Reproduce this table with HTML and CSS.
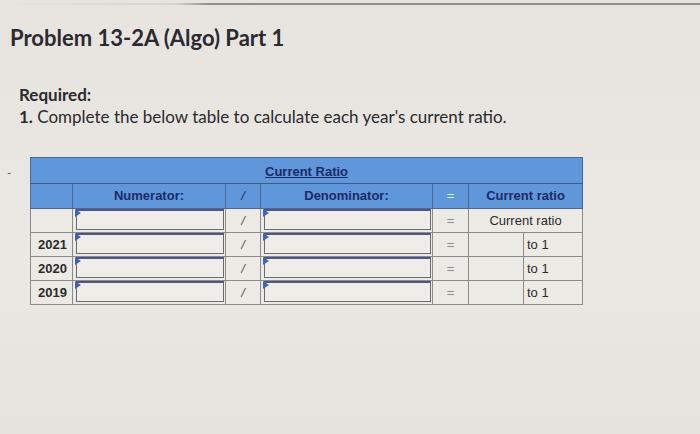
FILE: index.html
```html
<!DOCTYPE html>
<html>
<head>
<meta charset="utf-8">
<link rel="stylesheet" href="styles.css">
</head>
<body>
<div class="page">
  <div class="topline"></div>
  <h1 class="title">Problem 13-2A (Algo) Part 1</h1>
  <div class="req">
    <div class="req-head">Required:</div>
    <div class="req-text"><b>1.</b> Complete the below table to calculate each year's current ratio.</div>
  </div>
  <div class="table-wrap">
    <span class="dash">-</span>
    <table class="ratio">
      <colgroup>
        <col class="c-year"><col class="c-num"><col class="c-slash"><col class="c-den"><col class="c-eq"><col class="c-r1"><col class="c-r2">
      </colgroup>
      <tr class="h1">
        <th colspan="7"><span class="cap">Current Ratio</span></th>
      </tr>
      <tr class="h2">
        <th></th>
        <th>Numerator:</th>
        <th class="sl">/</th>
        <th>Denominator:</th>
        <th class="eq">=</th>
        <th colspan="2">Current ratio</th>
      </tr>
      <tr class="row">
        <td class="yr"></td>
        <td class="inp"><div class="box"><i class="flag"></i></div></td>
        <td class="sl">/</td>
        <td class="inp"><div class="box"><i class="flag"></i></div></td>
        <td class="eq">=</td>
        <td colspan="2" class="lbl">Current ratio</td>
      </tr>
      <tr class="row">
        <td class="yr">2021</td>
        <td class="inp"><div class="box"><i class="flag"></i></div></td>
        <td class="sl">/</td>
        <td class="inp"><div class="box"><i class="flag"></i></div></td>
        <td class="eq">=</td>
        <td class="blank"></td>
        <td class="to">to 1</td>
      </tr>
      <tr class="row">
        <td class="yr">2020</td>
        <td class="inp"><div class="box"><i class="flag"></i></div></td>
        <td class="sl">/</td>
        <td class="inp"><div class="box"><i class="flag"></i></div></td>
        <td class="eq">=</td>
        <td class="blank"></td>
        <td class="to">to 1</td>
      </tr>
      <tr class="row">
        <td class="yr">2019</td>
        <td class="inp"><div class="box"><i class="flag"></i></div></td>
        <td class="sl">/</td>
        <td class="inp"><div class="box"><i class="flag"></i></div></td>
        <td class="eq">=</td>
        <td class="blank"></td>
        <td class="to">to 1</td>
      </tr>
    </table>
  </div>
</div>
</body>
</html>
```

FILE: styles.css
```css
html, body {
  margin: 0;
  padding: 0;
  background: #e9e6e1;
}
.page {
  width: 700px;
  height: 434px;
  overflow: hidden;
  background: linear-gradient(180deg, #e7e4df 0%, #ebe8e3 60%, #e6e3de 100%);
  font-family: Lato, "Liberation Sans", sans-serif;
  color: #2a2a2e;
}
.topline {
  height: 2px;
  margin-top: 3px;
  background: linear-gradient(90deg, rgba(150,148,145,0) 0%, rgba(150,148,145,0.2) 25%, #8f8d8a 30%, #8f8d8a 100%);
}
.title {
  margin: 20px 0 0 10px;
  font-size: 22px;
  font-weight: 700;
  line-height: 26px;
  color: #2b2a30;
}
.req {
  margin: 33px 0 0 19px;
  font-size: 17px;
  line-height: 22px;
}
.req-head {
  font-weight: 700;
}
.req-text b {
  font-weight: 700;
}
.table-wrap {
  position: relative;
  margin: 29px 0 0 30px;
}
.dash {
  position: absolute;
  left: -23px;
  top: 8px;
  font-size: 12px;
  color: #555;
}
.ratio {
  border-collapse: collapse;
  table-layout: fixed;
  width: 552px;
  font-family: "Liberation Sans", Arial, sans-serif;
  font-size: 13px;
  color: #2b2b2b;
}
.c-year { width: 42px; }
.c-num { width: 153px; }
.c-slash { width: 35px; }
.c-den { width: 172px; }
.c-eq { width: 36px; }
.c-r1 { width: 55px; }
.c-r2 { width: 59px; }
.ratio th, .ratio td {
  padding: 0;
  border: 1px solid #8b8b8e;
  overflow: hidden;
  white-space: nowrap;
  line-height: 16px;
}
.ratio th {
  background: #5f97da;
  color: #1c2a66;
  font-weight: 700;
  text-align: center;
  border-color: #47699e;
}
.h1 th {
  height: 25px;
  border-bottom: 1px solid #3e5a8a;
}
.cap {
  text-decoration: underline;
  display: inline-block;
  padding-top: 3px;
}
.h2 th {
  height: 24px;
}
.h2 th.sl {
  font-style: italic;
  font-weight: 400;
}
.h2 th.eq {
  color: #e6ecf5;
  font-weight: 400;
}
.row td {
  height: 22px;
  background: #eceae5;
}
.yr {
  font-weight: 700;
  padding-left: 7px !important;
  padding-top: 1px !important;
}
.inp {
  vertical-align: top;
}
.box {
  position: relative;
  height: 18px;
  margin: 0 1px 0 3px;
  border: 1px solid #6a6a72;
  border-top: 2px solid #4f5686;
  background: #efede8;
}
.flag {
  position: absolute;
  left: -2px;
  top: -2px;
  width: 0;
  height: 0;
  border-top: 4px solid transparent;
  border-bottom: 4px solid transparent;
  border-left: 6px solid #3f64b8;
}
.ratio td.sl {
  text-align: center;
  font-style: italic;
  color: #555;
}
.ratio td.eq {
  text-align: center;
  color: #8f8f92;
}
.lbl {
  text-align: center;
  color: #2b2b2b;
}
.to {
  padding-left: 3px !important;
}
```
